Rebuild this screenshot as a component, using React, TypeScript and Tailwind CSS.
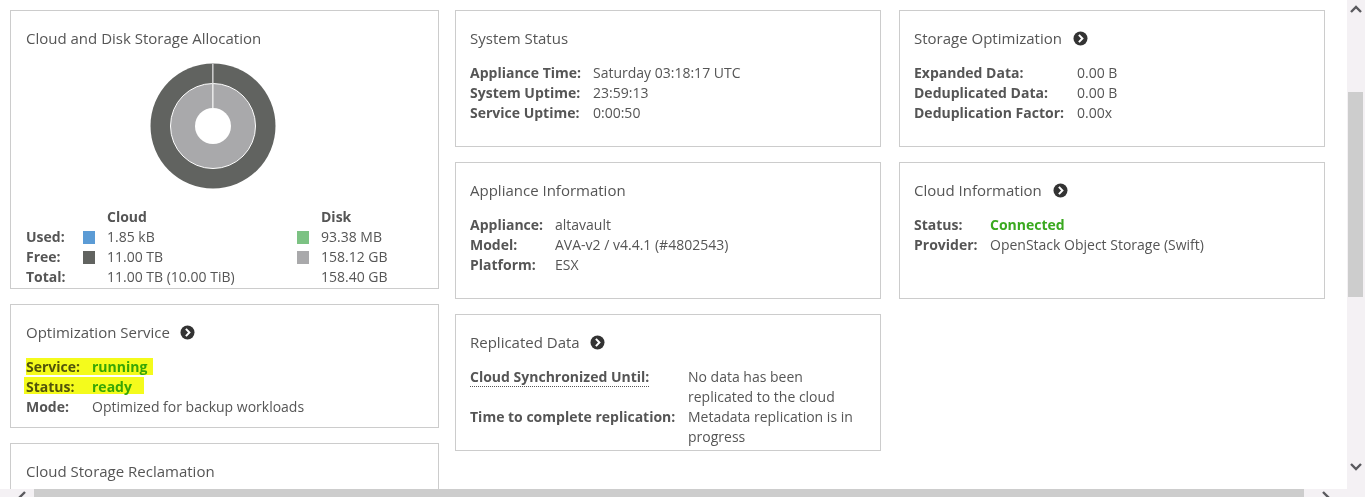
import React from "react";

const colors = {
  blue: "bg-[#5b9bd5]",
  dark: "bg-[#616360]",
  green: "bg-[#7cc283]",
  gray: "bg-[#a9a9ab]",
};

const Arrow = ({ wide }: { wide?: boolean }) => (
  <svg width="15" height="15" viewBox="0 0 15 15" className={`${wide ? "ml-[11px]" : "ml-[10px]"} shrink-0`}>
    <circle cx="7.5" cy="7.5" r="7" fill="#333333" />
    <path d="M5.9 3.9 9.4 7.5 5.9 11.1" fill="none" stroke="#ffffff" strokeWidth="2" />
  </svg>
);

const Card = ({
  title,
  link,
  wide,
  className,
  children,
}: {
  title: string;
  link?: boolean;
  wide?: boolean;
  className: string;
  children: React.ReactNode;
}) => (
  <div className={`border border-[#cccccc] bg-white pt-[17px] overflow-hidden ${className}`}>
    <div className="flex items-center h-[20px] text-[15px] text-[#555555]">
      <span>{title}</span>
      {link && <Arrow wide={wide} />}
    </div>
    <div className="mt-[15px]">{children}</div>
  </div>
);

const Row = ({
  label,
  width,
  children,
}: {
  label: string;
  width: string;
  children: React.ReactNode;
}) => (
  <div className="flex h-[20px] leading-[20px]">
    <span className={`font-bold shrink-0 ${width}`}>{label}</span>
    <span>{children}</span>
  </div>
);

const Swatch = ({ color }: { color?: string }) => (
  <span className="w-[25px] shrink-0 flex items-center pl-[1px]">
    {color && <span className={`block w-[12px] h-[13px] ${color}`} />}
  </span>
);

const Donut = () => (
  <svg width="126" height="126" viewBox="0 0 126 126" className="block">
    <circle cx="63" cy="63" r="62.5" fill="#616360" />
    <circle cx="63" cy="63" r="42.5" fill="#a9a9ab" stroke="#ffffff" strokeWidth="1" />
    <circle cx="63" cy="63" r="18" fill="#ffffff" />
    <rect x="62" y="0.5" width="1.6" height="20" fill="#c8c8c8" />
    <rect x="62" y="21" width="1.6" height="24" fill="#e6e6e6" />
  </svg>
);

const StorageCard = () => (
  <div className="border border-[#cccccc] bg-white pl-[15px] pt-[17px] h-[279px] overflow-hidden">
    <div className="h-[20px] flex items-center text-[15px] text-[#555555]">Cloud and Disk Storage Allocation</div>
    <div className="flex justify-center mt-[15px] pr-[39px]">
      <Donut />
    </div>
    <div className="mt-[18px] grid grid-cols-[56px_25px_189px_25px_1fr] leading-[20px] h-[80px]">
      <span />
      <span />
      <span className="font-bold">Cloud</span>
      <span />
      <span className="font-bold">Disk</span>

      <span className="font-bold">Used:</span>
      <Swatch color={colors.blue} />
      <span>1.85 kB</span>
      <Swatch color={colors.green} />
      <span>93.38 MB</span>

      <span className="font-bold">Free:</span>
      <Swatch color={colors.dark} />
      <span>11.00 TB</span>
      <Swatch color={colors.gray} />
      <span>158.12 GB</span>

      <span className="font-bold">Total:</span>
      <span />
      <span>11.00 TB (10.00 TiB)</span>
      <span />
      <span>158.40 GB</span>
    </div>
  </div>
);

const Highlight = ({ className }: { className: string }) => (
  <span className={`absolute bg-[#f4fb1c] mix-blend-multiply ${className}`} />
);

const OptimizationCard = () => (
  <Card title="Optimization Service" link className="h-[124px] mt-[15px] pl-[15px]">
    <div className="relative">
      <Row label="Service:" width="w-[66px]">
        <span className="font-bold text-[#3aa91f]">running</span>
      </Row>
      <Row label="Status:" width="w-[66px]">
        <span className="font-bold text-[#3aa91f]">ready</span>
      </Row>
      <Row label="Mode:" width="w-[66px]">
        Optimized for backup workloads
      </Row>
      {/* marker strokes over the first two rows */}
      <Highlight className="left-[0px] top-[1px] w-[127px] h-[17px]" />
      <Highlight className="left-[-2px] top-[20px] w-[120px] h-[17px]" />
    </div>
  </Card>
);

export default function App() {
  return (
    <div className="w-[1365px] h-[497px] overflow-hidden bg-white text-[14px] text-[#555555] font-['Open_Sans',sans-serif] flex flex-col">
      <div className="flex flex-1 min-h-0">
        <div className="flex-1 min-w-0 overflow-hidden flex items-start pt-[10px] pl-[10px]">
          {/* left column */}
          <div className="w-[429px] shrink-0">
            <StorageCard />
            <OptimizationCard />
            <Card title="Cloud Storage Reclamation" className="h-[100px] mt-[15px] pl-[15px]">
              <span />
            </Card>
          </div>

          {/* middle column */}
          <div className="w-[426px] shrink-0 ml-[16px] flex flex-col gap-[15px]">
            <Card title="System Status" className="h-[137px] pl-[14px]">
              <Row label="Appliance Time:" width="w-[123px]">Saturday 03:18:17 UTC</Row>
              <Row label="System Uptime:" width="w-[123px]">23:59:13</Row>
              <Row label="Service Uptime:" width="w-[123px]">0:00:50</Row>
            </Card>
            <Card title="Appliance Information" className="h-[137px] pl-[14px]">
              <Row label="Appliance:" width="w-[85px]">altavault</Row>
              <Row label="Model:" width="w-[85px]">AVA-v2 / v4.4.1 (#4802543)</Row>
              <Row label="Platform:" width="w-[85px]">ESX</Row>
            </Card>
            <Card title="Replicated Data" link className="h-[137px] pl-[14px]">
              <div className="grid grid-cols-[218px_175px] leading-[20px]">
                <span className="font-bold">
                  <span className="border-b border-dotted border-[#555555]">Cloud Synchronized Until:</span>
                </span>
                <span>No data has been replicated to the cloud</span>
                <span className="font-bold">Time to complete replication:</span>
                <span>Metadata replication is in progress</span>
              </div>
            </Card>
          </div>

          {/* right column */}
          <div className="w-[426px] shrink-0 ml-[18px] flex flex-col gap-[15px]">
            <Card title="Storage Optimization" link wide className="h-[137px] pl-[14px]">
              <Row label="Expanded Data:" width="w-[163px]">0.00 B</Row>
              <Row label="Deduplicated Data:" width="w-[163px]">0.00 B</Row>
              <Row label="Deduplication Factor:" width="w-[163px]">0.00x</Row>
            </Card>
            <Card title="Cloud Information" link wide className="h-[137px] pl-[14px]">
              <Row label="Status:" width="w-[76px]">
                <span className="font-bold text-[#3aa91f]">Connected</span>
              </Row>
              <Row label="Provider:" width="w-[76px]">OpenStack Object Storage (Swift)</Row>
            </Card>
          </div>
        </div>

        {/* vertical scrollbar */}
        <div className="w-[18px] shrink-0 bg-[#f4f1f4] flex flex-col text-[#5a5a5e]">
          <svg width="12" height="8" viewBox="0 0 12 8" className="mt-[5px] self-center">
            <path d="M1 7 6 2l5 5" fill="none" stroke="currentColor" strokeWidth="2.4" />
          </svg>
          <div className="w-[15px] h-[205px] mt-[79px] ml-[1px] bg-[#cdcdcd]" />
          <svg width="12" height="8" viewBox="0 0 12 8" className="mt-auto mb-[18px] self-center">
            <path d="M1 1l5 5 5-5" fill="none" stroke="currentColor" strokeWidth="2.4" />
          </svg>
        </div>
      </div>

      {/* horizontal scrollbar */}
      <div className="h-[8px] shrink-0 bg-[#f4f1f4] flex items-start overflow-hidden text-[#5a5a5e]">
        <svg width="8" height="12" viewBox="0 0 8 12" className="ml-[18px] mt-[2px] shrink-0">
          <path d="M7 1 2 6l5 5" fill="none" stroke="currentColor" strokeWidth="2.4" />
        </svg>
        <div className="h-[8px] w-[1270px] ml-[8px] bg-[#cdcdcd] shrink-0" />
        <svg width="8" height="12" viewBox="0 0 8 12" className="ml-[18px] mt-[2px] shrink-0">
          <path d="M1 1l5 5-5 5" fill="none" stroke="currentColor" strokeWidth="2.4" />
        </svg>
      </div>
    </div>
  );
}
